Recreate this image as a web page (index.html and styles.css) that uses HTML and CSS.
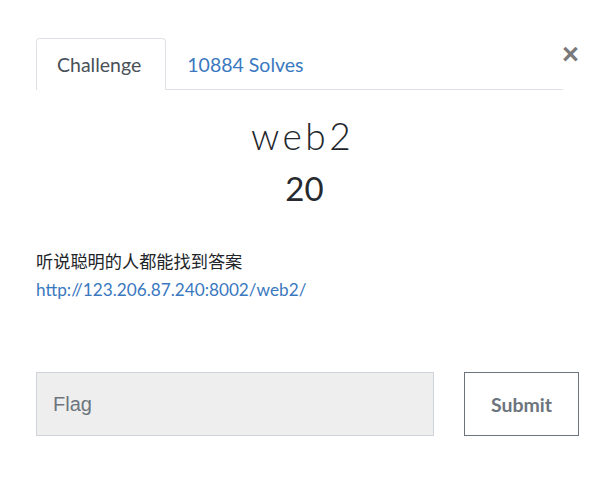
FILE: index.html
```html
<!DOCTYPE html>
<html>
<head>
<meta charset="utf-8">
<link rel="stylesheet" href="styles.css">
</head>
<body>
<div class="modal">
  <button class="close" aria-label="Close">&times;</button>
  <ul class="tabs">
    <li class="tab active">Challenge</li>
    <li class="tab link">10884 Solves</li>
  </ul>
  <h3 class="name">web2</h3>
  <h4 class="value">20</h4>
  <div class="desc">
    <p>听说聪明的人都能找到答案<br><a href="#">http://123.206.87.240:8002/web2/</a></p>
  </div>
  <form class="flag-form">
    <input class="flag" type="text" placeholder="Flag">
    <button class="submit" type="button">Submit</button>
  </form>
</div>
</body>
</html>
```
FILE: styles.css
```css
html, body {
  margin: 0;
  padding: 0;
  background: #fff;
}
body {
  font-family: Lato, "Noto Sans CJK SC", sans-serif;
  font-size: 17.2px;
  color: #212529;
}
.modal {
  position: relative;
  width: 527px;
  padding: 38px 48px 0 36px;
}
.close {
  position: absolute;
  top: 40px;
  left: 562px;
  border: 0;
  background: none;
  padding: 0;
  font-family: "Liberation Sans", Arial, sans-serif;
  font-size: 29px;
  font-weight: bold;
  line-height: 29px;
  color: #7a7a7a;
  cursor: pointer;
}
.tabs {
  display: flex;
  list-style: none;
  margin: 0;
  padding: 0;
  border-bottom: 1px solid #dee2e6;
  font-size: 19.5px;
}
.tab {
  height: 52px;
  line-height: 52px;
  padding: 0 22px 0 20px;
  border: 1px solid transparent;
  border-bottom: 0;
  border-radius: 4px 4px 0 0;
  margin-bottom: -1px;
  box-sizing: border-box;
}
.tab.active {
  border-color: #dee2e6;
  background: #fff;
  color: #495057;
  padding-right: 24px;
}
.tab.link {
  color: #3a78bf;
}
.name {
  margin: 24px 0 0;
  text-align: center;
  font-family: Lato, sans-serif;
  font-weight: 300;
  font-size: 37px;
  letter-spacing: 3.5px;
  line-height: 44px;
  color: #212529;
  padding-left: 6px;
}
.value {
  margin: 10px 0 0;
  text-align: center;
  font-family: Lato, sans-serif;
  font-weight: 400;
  font-size: 33px;
  line-height: 40px;
  color: #262a2e;
  padding-left: 10px;
}
.desc {
  margin-top: 40px;
}
.desc p {
  margin: 0;
  line-height: 28px;
}
.desc a {
  color: #3a78bf;
  text-decoration: none;
}
.flag-form {
  display: flex;
  width: 543px;
  margin-top: 68px;
}
.flag {
  flex: 0 0 398px;
  width: 398px;
  height: 64px;
  box-sizing: border-box;
  border: 1px solid #ced4da;
  background: #eeeeee;
  padding: 0 16px;
  font-family: "Liberation Sans", Arial, sans-serif;
  font-size: 20px;
  color: #495057;
  outline: none;
}
.flag::placeholder {
  color: #6c757d;
}
.submit {
  flex: 0 0 115px;
  margin-left: 30px;
  width: 115px;
  height: 64px;
  box-sizing: border-box;
  border: 1px solid #6c757d;
  background: #fff;
  font-family: Lato, sans-serif;
  font-weight: 700;
  font-size: 19.5px;
  color: #6c757d;
}
```
